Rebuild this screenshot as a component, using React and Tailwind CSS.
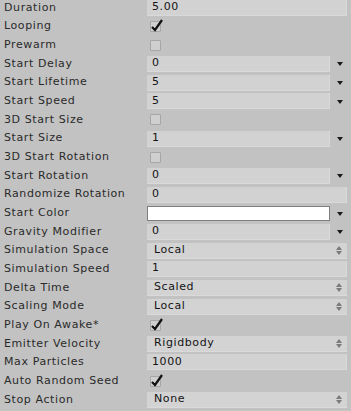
const rows = [
  { label: 'Duration', type: 'text', value: '5.00' },
  { label: 'Looping', type: 'check', checked: true },
  { label: 'Prewarm', type: 'check' },
  { label: 'Start Delay', type: 'curve', value: '0' },
  { label: 'Start Lifetime', type: 'curve', value: '5' },
  { label: 'Start Speed', type: 'curve', value: '5' },
  { label: '3D Start Size', type: 'check' },
  { label: 'Start Size', type: 'curve', value: '1' },
  { label: '3D Start Rotation', type: 'check' },
  { label: 'Start Rotation', type: 'curve', value: '0' },
  { label: 'Randomize Rotation', type: 'text', value: '0' },
  { label: 'Start Color', type: 'color' },
  { label: 'Gravity Modifier', type: 'curve', value: '0' },
  { label: 'Simulation Space', type: 'enum', value: 'Local' },
  { label: 'Simulation Speed', type: 'text', value: '1' },
  { label: 'Delta Time', type: 'enum', value: 'Scaled' },
  { label: 'Scaling Mode', type: 'enum', value: 'Local' },
  { label: 'Play On Awake*', type: 'check', checked: true },
  { label: 'Emitter Velocity', type: 'enum', value: 'Rigidbody' },
  { label: 'Max Particles', type: 'text', value: '1000' },
  { label: 'Auto Random Seed', type: 'check', checked: true },
  { label: 'Stop Action', type: 'enum', value: 'None' },
]

const font = { fontFamily: '"DejaVu Sans", "Liberation Sans", sans-serif' }

const DownArrow = () => (
  <svg width="6" height="5" viewBox="0 0 6 5" className="shrink-0">
    <path d="M0 1 L6 1 L3 5 Z" fill="#1a1a1a" />
  </svg>
)

const UpDown = () => (
  <svg width="6" height="9" viewBox="0 0 6 9" className="shrink-0">
    <path d="M0 4 L6 4 L3 0 Z" fill="#7a7a7a" />
    <path d="M0 5 L6 5 L3 9 Z" fill="#7a7a7a" />
  </svg>
)

const Check = ({ checked }) => (
  <div className="relative w-[11px] h-[11px] ml-[3px] border border-[#a6a6a6] bg-[#cfcfcf] rounded-[1px]">
    {checked && (
      <svg width="14" height="13" viewBox="0 0 14 13" className="absolute left-[-1px] top-[-3px]">
        <path d="M2 8 L5 11 L12 1" stroke="#111" strokeWidth="2.2" fill="none" />
      </svg>
    )}
  </div>
)

const Field = ({ row }) => {
  if (row.type === 'check') return <Check checked={row.checked} />
  if (row.type === 'text')
    return (
      <div className="w-[200px] h-[16px] bg-[#d2d2d2] border-b border-r border-[#d9d9d9] flex items-center pl-[5px] text-[#141414]">
        {row.value}
      </div>
    )
  if (row.type === 'enum')
    return (
      <div className="w-[200px] h-[16px] bg-[#d3d3d3] border-b border-[#dadada] flex items-center justify-between pl-[7px] pr-[5px] text-[#141414]">
        <span>{row.value}</span>
        <UpDown />
      </div>
    )
  if (row.type === 'color')
    return (
      <div className="flex items-center">
        <div className="w-[183px] h-[15px] bg-white border border-[#7f7f7f]" />
        <div className="ml-[7px]"><DownArrow /></div>
      </div>
    )
  return (
    <div className="flex items-center">
      <div className="w-[183px] h-[16px] bg-[#d2d2d2] border-b border-r border-[#d9d9d9] flex items-center pl-[5px] text-[#141414]">
        {row.value}
      </div>
      <div className="ml-[7px]"><DownArrow /></div>
    </div>
  )
}

export default function App() {
  return (
    <div className="w-[351px] h-[411px] bg-[#c2c2c2] overflow-hidden" style={font}>
      <div className="mt-[-1.33px]">
        {rows.map((row) => (
          <div key={row.label} className="h-[18.67px] flex items-center text-[11px] tracking-[0.6px]">
            <div className="w-[147px] pl-[4px] text-[#2a2a2a] whitespace-nowrap">{row.label}</div>
            <Field row={row} />
          </div>
        ))}
      </div>
    </div>
  )
}
